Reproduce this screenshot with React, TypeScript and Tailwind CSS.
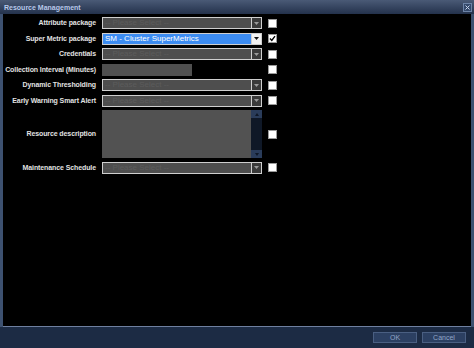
import React from "react";

type Row =
  | { kind: "select"; label: string; value?: string; active?: boolean; checked?: boolean }
  | { kind: "input"; label: string }
  | { kind: "textarea"; label: string };

const rows: Row[] = [
  { kind: "select", label: "Attribute package" },
  { kind: "select", label: "Super Metric package", value: "SM - Cluster SuperMetrics", active: true, checked: true },
  { kind: "select", label: "Credentials" },
  { kind: "input", label: "Collection Interval (Minutes)" },
  { kind: "select", label: "Dynamic Thresholding" },
  { kind: "select", label: "Early Warning Smart Alert" },
  { kind: "textarea", label: "Resource description" },
  { kind: "select", label: "Maintenance Schedule" },
];

function Checkbox({ checked }: { checked?: boolean }) {
  return (
    <div className="ml-[6px] flex h-[9px] w-[9px] items-center justify-center border border-[#9a9a9a] bg-white">
      {checked && (
        <svg width="7" height="7" viewBox="0 0 7 7">
          <path d="M1 3.6 L2.8 5.4 L6 1.2" stroke="#000" strokeWidth="1.4" fill="none" />
        </svg>
      )}
    </div>
  );
}

function Select({ value, active }: { value?: string; active?: boolean }) {
  return (
    <div className="flex h-[12px] w-[160px] bg-[#cfcfcf] p-[1px]">
      <div
        className={
          active
            ? "flex-1 bg-[#3c8cf2] pl-[2px] text-[8px] leading-[10px] text-white"
            : "flex-1 bg-[#4e4e4e] pl-[2px] text-[8px] leading-[10px] text-[#5c5c5c]"
        }
      >
        {value ?? "-- Please Select --"}
      </div>
      <div
        className={
          active
            ? "ml-[1px] flex w-[9px] items-center justify-center bg-[#f2f2f2]"
            : "ml-[1px] flex w-[9px] items-center justify-center bg-[#3a3a3a]"
        }
      >
        <svg width="5" height="3" viewBox="0 0 5 3">
          <path d="M0 0 H5 L2.5 3 Z" fill={active ? "#111" : "#9a9a9a"} />
        </svg>
      </div>
    </div>
  );
}

function Label({ text }: { text: string }) {
  return (
    <div className="flex w-[94px] shrink-0 justify-end pr-[1px]">
      <span className="whitespace-nowrap text-[7px] font-bold leading-[12px] tracking-[-0.1px] text-[#e2e2e2]">
        {text}
      </span>
    </div>
  );
}

export default function App() {
  return (
    <div
      className="flex h-[348px] w-[474px] flex-col overflow-hidden bg-[#1c2a42]"
      style={{ fontFamily: '"Liberation Sans", Arial, sans-serif' }}
    >
      <div className="flex h-[14px] shrink-0 items-center justify-between bg-gradient-to-b from-[#4a5a76] to-[#24324c] pl-[4px] pr-[2px]">
        <div className="text-[7px] font-bold leading-none text-[#b9c9ea]">Resource Management</div>
        <div className="flex h-[9px] w-[9px] items-center justify-center border border-[#6d83a6] bg-[#34496b]">
          <svg width="5" height="5" viewBox="0 0 5 5">
            <path d="M0.5 0.5 L4.5 4.5 M4.5 0.5 L0.5 4.5" stroke="#c8d4ea" strokeWidth="1" />
          </svg>
        </div>
      </div>

      <div className="flex flex-1 bg-[#3d5170] pl-[3px] pr-[3px]">
        <div className="flex flex-1 flex-col gap-[3.5px] border-b border-[#6f80a0] bg-black pt-[3px]">
          {rows.map((r) => (
            <div key={r.label} className="flex items-center">
              <Label text={r.label} />
              <div className="ml-[5px] flex items-center">
                {r.kind === "select" && <Select value={r.value} active={r.active} />}
                {r.kind === "input" && (
                  <div className="mr-[70px] h-[12px] w-[90px] bg-[#505050]" />
                )}
                {r.kind === "textarea" && (
                  <div className="flex h-[48px] w-[160px]">
                    <div className="flex-1 bg-[#525252]" />
                    <div className="flex w-[11px] flex-col justify-between bg-[#0f1827]">
                      <div className="flex h-[8px] items-center justify-center bg-[#2a3c5a]">
                        <svg width="4" height="3" viewBox="0 0 4 3">
                          <path d="M0 3 H4 L2 0 Z" fill="#0f1827" />
                        </svg>
                      </div>
                      <div className="flex h-[8px] items-center justify-center bg-[#2a3c5a]">
                        <svg width="4" height="3" viewBox="0 0 4 3">
                          <path d="M0 0 H4 L2 3 Z" fill="#0f1827" />
                        </svg>
                      </div>
                    </div>
                  </div>
                )}
                <Checkbox checked={r.kind === "select" ? r.checked : false} />
              </div>
            </div>
          ))}
        </div>
      </div>

      <div className="flex h-[21px] shrink-0 items-center justify-end gap-[5px] bg-[#1c2b44] pr-[8px]">
        <button className="h-[11px] w-[44px] border border-[#4a5f82] bg-[#2c4062] text-[7px] leading-none text-[#93a6c8]">
          OK
        </button>
        <button className="h-[11px] w-[44px] border border-[#4a5f82] bg-[#2c4062] text-[7px] leading-none text-[#93a6c8]">
          Cancel
        </button>
      </div>
    </div>
  );
}
